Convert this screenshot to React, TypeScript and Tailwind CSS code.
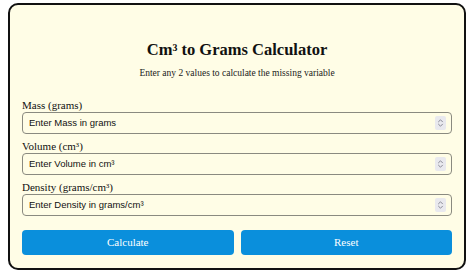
import React from "react";

function Spinner() {
  return (
    <div className="w-[11px] h-[14px] bg-[#e9e9ee] rounded-[2px] flex items-center justify-center">
      <svg width="7" height="10" viewBox="0 0 7 10" fill="none" stroke="#8a8a96" strokeWidth="1" strokeLinecap="round" strokeLinejoin="round">
        <path d="M1.5 3.8 L3.5 1.8 L5.5 3.8" />
        <path d="M1.5 6.2 L3.5 8.2 L5.5 6.2" />
      </svg>
    </div>
  );
}

function Field({ label, placeholder, mt }: { label: React.ReactNode; placeholder: string; mt: string }) {
  return (
    <div className={mt}>
      <div className="h-[13px] leading-[13px] text-[11px] text-[#111] font-['Liberation_Serif',serif]">{label}</div>
      <div className="h-[22px] border border-[#8a8a80] rounded-[4px] flex items-center justify-between pl-[6px] pr-[5px] bg-[#fffde6]">
        <span className="text-[9.5px] text-[#111] font-['Liberation_Sans',Arial,sans-serif]">{placeholder}</span>
        <Spinner />
      </div>
    </div>
  );
}

export default function App() {
  return (
    <div className="w-[474px] h-[274px] bg-white pt-[3px] px-[8px]">
      <div className="h-[267px] border-2 border-[#111] rounded-[10px] bg-[#fffde6] px-[12px] pt-[35px]">
        <h1 className="text-center h-[20px] leading-[20px] text-[16.5px] font-bold text-[#111] font-['Liberation_Serif',serif]">
          Cm³ to Grams Calculator
        </h1>
        <p className="mt-[7px] text-center h-[12px] leading-[12px] text-[9.5px] text-[#1a1a1a] font-['Liberation_Serif',serif]">
          Enter any 2 values to calculate the missing variable
        </p>
        <Field mt="mt-[20px]" label="Mass (grams)" placeholder="Enter Mass in grams" />
        <Field mt="mt-[6px]" label="Volume (cm³)" placeholder="Enter Volume in cm³" />
        <Field mt="mt-[6px]" label="Density (grams/cm³)" placeholder="Enter Density in grams/cm³" />
        <div className="mt-[14px] flex gap-[7px]">
          <button className="flex-1 h-[25px] rounded-[4px] bg-[#0a8fdc] text-white text-[11px] font-['Liberation_Serif',serif]">Calculate</button>
          <button className="flex-1 h-[25px] rounded-[4px] bg-[#0a8fdc] text-white text-[11px] font-['Liberation_Serif',serif]">Reset</button>
        </div>
      </div>
    </div>
  );
}
